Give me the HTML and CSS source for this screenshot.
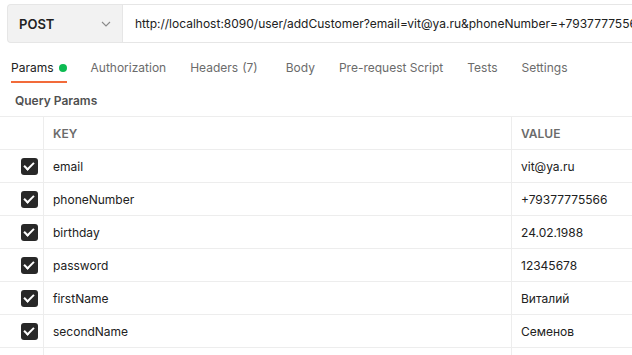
FILE: index.html
```html
<!DOCTYPE html>
<html lang="en">
<head>
    <meta charset="UTF-8">
    <title>Request Params</title>
    <link rel="stylesheet" href="styles.css">
</head>
<body>
    <div class="request-bar">
        <div class="method">
            <span class="method-name">POST</span>
            <svg class="chevron" width="10" height="6" viewBox="0 0 10 6"><path d="M1 1l4 4 4-4" fill="none" stroke="#8a8a8a" stroke-width="1.1"/></svg>
        </div>
        <div class="url"><span>http://localhost:8090/user/addCustomer?email=vit@ya.ru&amp;phoneNumber=+79377775566&amp;birthday=24.02.1988</span></div>
    </div>

    <div class="tabs">
        <div class="tab active">Params <span class="dot"></span></div>
        <div class="tab">Authorization</div>
        <div class="tab">Headers <span class="count">(7)</span></div>
        <div class="tab">Body</div>
        <div class="tab">Pre-request Script</div>
        <div class="tab">Tests</div>
        <div class="tab">Settings</div>
    </div>

    <div class="section-title">Query Params</div>

    <div class="params">
        <div class="row head">
            <div class="cell check"></div>
            <div class="cell key">KEY</div>
            <div class="cell value">VALUE</div>
        </div>
        <div class="row">
            <div class="cell check"><span class="box"></span></div>
            <div class="cell key">email</div>
            <div class="cell value">vit@ya.ru</div>
        </div>
        <div class="row">
            <div class="cell check"><span class="box"></span></div>
            <div class="cell key">phoneNumber</div>
            <div class="cell value">+79377775566</div>
        </div>
        <div class="row">
            <div class="cell check"><span class="box"></span></div>
            <div class="cell key">birthday</div>
            <div class="cell value">24.02.1988</div>
        </div>
        <div class="row">
            <div class="cell check"><span class="box"></span></div>
            <div class="cell key">password</div>
            <div class="cell value">12345678</div>
        </div>
        <div class="row">
            <div class="cell check"><span class="box"></span></div>
            <div class="cell key">firstName</div>
            <div class="cell value">Виталий</div>
        </div>
        <div class="row">
            <div class="cell check"><span class="box"></span></div>
            <div class="cell key">secondName</div>
            <div class="cell value">Семенов</div>
        </div>
        <div class="row last">
            <div class="cell check"></div>
            <div class="cell key"></div>
            <div class="cell value"></div>
        </div>
    </div>
</body>
</html>
```

FILE: styles.css
```css
html, body {
    margin: 0;
    height: 355px;
    overflow: hidden;
}

body {
    background: #fff;
    font-family: Inter, "Noto Sans", sans-serif;
    font-size: 12px;
    color: #212121;
}

.request-bar {
    display: flex;
    height: 39px;
    margin: 4px 0 0 7px;
}

.method {
    width: 115px;
    flex: none;
    display: flex;
    align-items: center;
    justify-content: space-between;
    padding: 0 11px 0 11px;
    box-sizing: border-box;
    background: #f2f2f2;
    border: 1px solid #e6e6e6;
    border-right: none;
    border-radius: 4px 0 0 4px;
    font-size: 13px;
}

.method-name {
    font-weight: 600;
    color: #212121;
}

.url {
    flex: 1;
    min-width: 0;
    display: flex;
    align-items: center;
    padding-left: 12px;
    border: 1px solid #e6e6e6;
    border-right: none;
    white-space: nowrap;
    overflow: hidden;
    color: #212121;
}

.tabs {
    display: flex;
    height: 33px;
    margin-top: 7px;
    padding-left: 11px;
}

.tab {
    display: flex;
    align-items: center;
    margin-right: 24px;
    padding-top: 4px;
    color: #6b6b6b;
    border-bottom: 2px solid transparent;
    box-sizing: border-box;
}

.tab.active {
    color: #212121;
    border-bottom-color: #f26b3a;
}

.tab .count {
    margin-left: 4px;
    margin-right: 4px;
}

.dot {
    width: 8px;
    height: 8px;
    border-radius: 50%;
    background: #0cbb52;
    margin-left: 5px;
}

.section-title {
    font-weight: 600;
    color: #505050;
    padding: 10px 0 0 15px;
    height: 33px;
    line-height: 15px;
    box-sizing: border-box;
}

.params {
    border-top: 1px solid #ededed;
}

.row {
    display: flex;
    height: 33px;
    border-bottom: 1px solid #ededed;
    box-sizing: border-box;
}

.row.last {
    border-bottom: none;
}

.cell {
    display: flex;
    align-items: center;
}

.check {
    width: 44px;
    flex: none;
    justify-content: center;
    padding-left: 16px;
    box-sizing: border-box;
    border-right: 1px solid #ededed;
}

.key {
    width: 468px;
    flex: none;
    padding-left: 9px;
    box-sizing: border-box;
    border-right: 1px solid #ededed;
}

.value {
    flex: 1;
    padding-left: 9px;
}

.head .cell {
    font-weight: 600;
    color: #6b6b6b;
}

.box {
    position: relative;
    width: 17px;
    height: 17px;
    border-radius: 3px;
    background: #282828;
}

.box::after {
    content: "";
    position: absolute;
    left: 5px;
    top: 2px;
    width: 4px;
    height: 8px;
    border: solid #fff;
    border-width: 0 2.5px 2.5px 0;
    transform: rotate(45deg);
}
```
